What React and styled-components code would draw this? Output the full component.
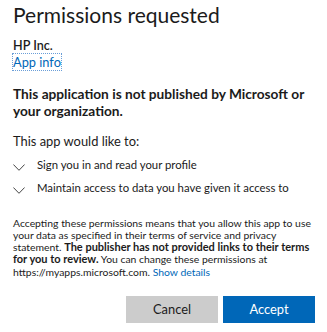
import React from "react";
import styled, { createGlobalStyle } from "styled-components";

const Global = createGlobalStyle`
  html, body {
    margin: 0;
    padding: 0;
    background: #ffffff;
  }
  body {
    font-family: Lato, "Liberation Sans", sans-serif;
    color: #1b1b1b;
  }
`;

const Dialog = styled.div`
  width: 327px;
  height: 332px;
  box-sizing: border-box;
  padding: 2px 12px 0 13px;
  overflow: hidden;
`;

const Title = styled.h1`
  margin: 0;
  font-size: 21px;
  font-weight: 400;
  line-height: 26px;
`;

const Publisher = styled.div`
  margin-top: 10px;
  font-size: 12.6px;
  font-weight: 600;
  line-height: 16px;
`;

const Link = styled.a`
  color: #0067b8;
  text-decoration: none;
  cursor: pointer;
  ${(p) => p.$focused && `
    outline: 1px dotted #6a9ed8;
  `}
`;

const AppInfo = styled.div`
  font-size: 12.8px;
  line-height: 16px;
`;

const Warning = styled.p`
  margin: 14.5px 0 0;
  font-size: 13.7px;
  font-weight: 700;
  line-height: 17.5px;
`;

const Intro = styled.p`
  margin: 12.5px 0 0;
  font-size: 12.9px;
  line-height: 18px;
`;

const ScopeList = styled.ul`
  list-style: none;
  margin: 3px 0 0;
  padding: 0;
`;

const Scope = styled.li`
  display: flex;
  align-items: flex-start;
  gap: 12px;
  font-size: 11.35px;
  line-height: 23px;
`;

const Chevron = styled.svg`
  width: 12px;
  height: 7px;
  flex: none;
  margin-top: 11px;
`;

const Fine = styled.p`
  margin: 17.5px 0 0;
  font-size: 10.4px;
  line-height: 12.3px;
`;

const Strong = styled.b`
  font-size: 11px;
  font-weight: 700;
`;

const Actions = styled.div`
  display: flex;
  justify-content: flex-end;
  gap: 5px;
  margin-top: 18px;
`;

const Button = styled.button`
  width: 92px;
  height: 27px;
  border: none;
  padding: 0;
  font-family: inherit;
  font-size: 12.9px;
  color: ${(p) => (p.$primary ? "#ffffff" : "#1b1b1b")};
  background: ${(p) => (p.$primary ? "#0067b8" : "#cccccc")};
  cursor: pointer;
`;

const ChevronIcon = () => (
  <Chevron viewBox="0 0 12 7">
    <path d="M0.4 0.5 L6 6.3 L11.6 0.5" fill="none" stroke="#444" strokeWidth="1" />
  </Chevron>
);

const SCOPES = [
  "Sign you in and read your profile",
  "Maintain access to data you have given it access to",
];

export default function App() {
  return (
    <>
      <Global />
      <Dialog>
        <Title>Permissions requested</Title>
        <Publisher>HP Inc.</Publisher>
        <AppInfo>
          <Link $focused>App info</Link>
        </AppInfo>
        <Warning>This application is not published by Microsoft or your organization.</Warning>
        <Intro>This app would like to:</Intro>
        <ScopeList>
          {SCOPES.map((s) => (
            <Scope key={s}>
              <ChevronIcon />
              <span>{s}</span>
            </Scope>
          ))}
        </ScopeList>
        <Fine>
          Accepting these permissions means that you allow this app to use your data as specified in
          their terms of service and privacy statement.{" "}
          <Strong>The publisher has not provided links to their terms for you to review.</Strong> You
          can change these permissions at https://myapps.microsoft.com. <Link>Show details</Link>
        </Fine>
        <Actions>
          <Button>Cancel</Button>
          <Button $primary>Accept</Button>
        </Actions>
      </Dialog>
    </>
  );
}
